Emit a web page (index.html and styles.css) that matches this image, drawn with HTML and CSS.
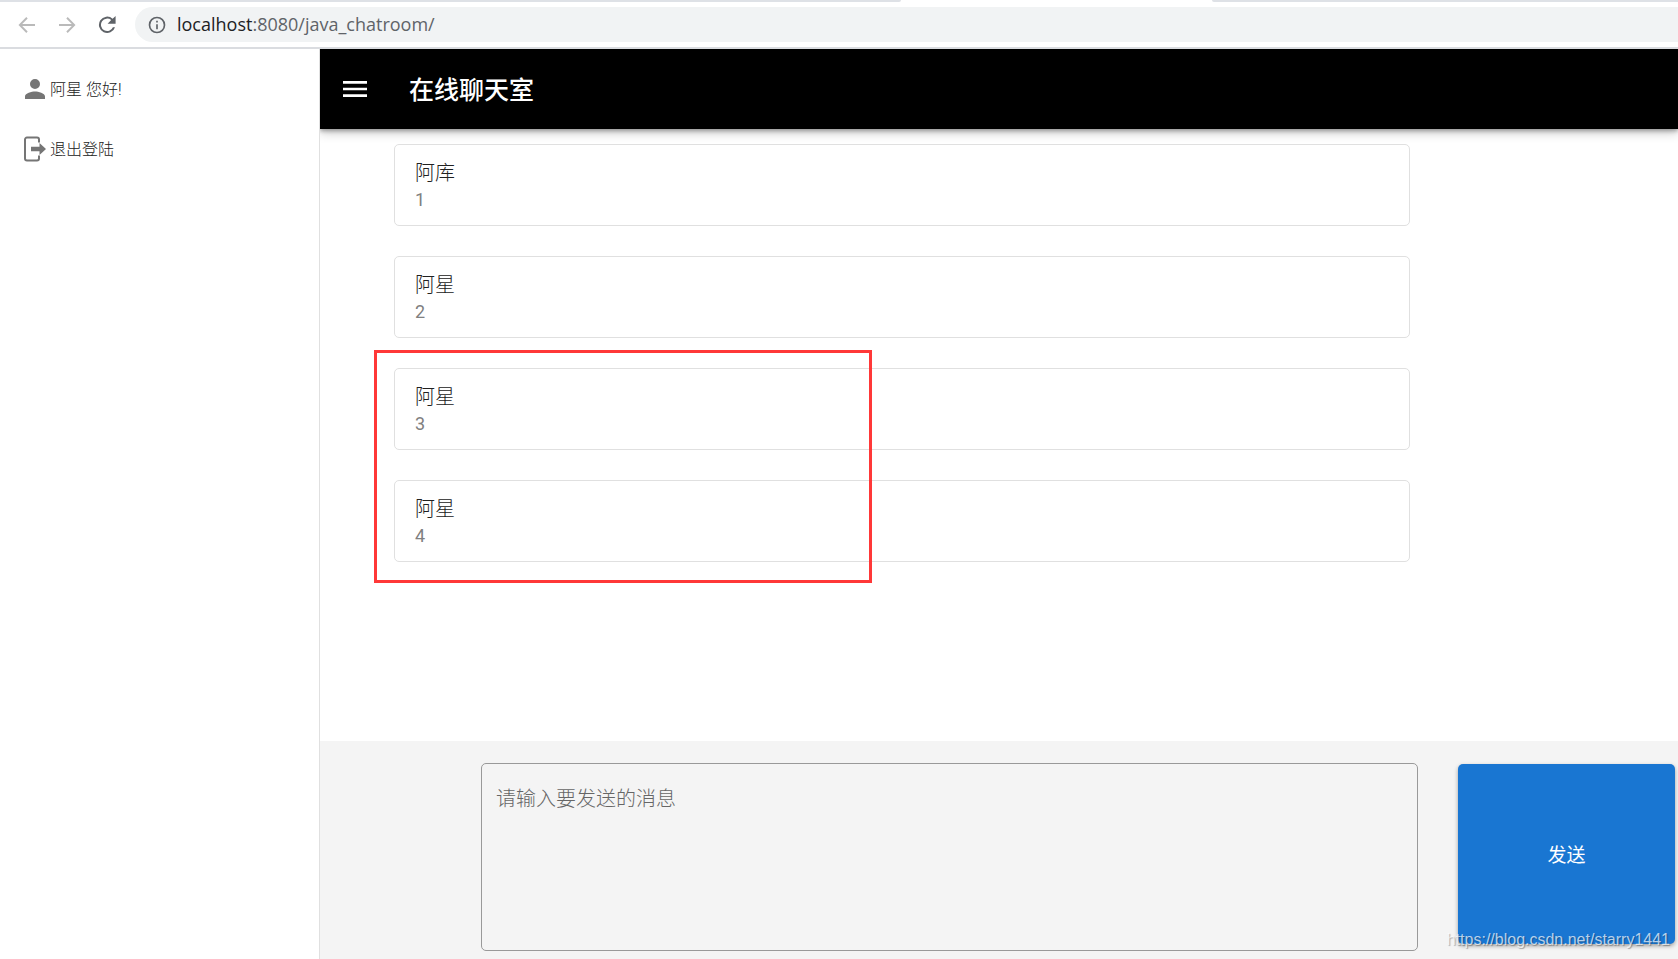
FILE: index.html
```
<!DOCTYPE html>
<html lang="zh-CN">
<head>
    <meta charset="UTF-8">
    <meta name="viewport" content="width=device-width, initial-scale=1.0">
    <title>在线聊天室</title>
    <link rel="stylesheet" href="styles.css">
</head>
<body>
    <!-- Browser bar -->
    <div class="tab-edge"><span class="tab-left"></span><span class="tab-right"></span></div>
    <div class="browser-bar">
        <button class="nav-btn" type="button" aria-label="后退" disabled>
            <svg width="24" height="24" viewBox="0 0 24 24"><path d="M20 11H7.200l5.500-5.500-1.400-1.400L3.500 12l7.800 7.900 1.400-1.400L7.200 13H20z"/></svg>
        </button>
        <button class="nav-btn" type="button" aria-label="前进" disabled>
            <svg width="24" height="24" viewBox="0 0 24 24"><path d="M4 11h12.800l-5.500-5.500 1.400-1.400 7.800 7.900-7.800 7.900-1.400-1.400 5.500-5.500H4z"/></svg>
        </button>
        <button class="nav-btn reload" type="button" aria-label="刷新">
            <svg width="24" height="24" viewBox="0 0 24 24"><path d="M17.600 5.700A8.200 8.200 0 1 0 20 14.200h-2.100A6.200 6.200 0 1 1 16.200 7.100L12.600 10.800H20.600V3z"/></svg>
        </button>
        <div class="address">
            <svg width="20" height="20" viewBox="0 0 24 24"><path d="M11 7h2v2h-2zm0 4h2v6h-2zm1-9a10 10 0 1 0 0 20 10 10 0 0 0 0-20zm0 18a8 8 0 1 1 0-16 8 8 0 0 1 0 16z"/></svg>
            <span class="url"><b>localhost</b>:8080/java_chatroom/</span>
        </div>
    </div>

    <div class="app">
        <!-- Sidebar -->
        <aside class="sidebar">
            <div class="side-item">
                <svg width="30" height="30" viewBox="0 0 24 24"><path d="M12 12a4 4 0 1 0 0-8 4 4 0 0 0 0 8zm0 2c-2.670 0-8 1.340-8 4v2h16v-2c0-2.660-5.330-4-8-4z"/></svg>
                <span>阿星 您好!</span>
            </div>
            <a class="side-item" href="#">
                <svg width="30" height="30" viewBox="0 0 30 30"><path d="M19 8.500V5.500a2 2 0 0 0-2-2H7a2 2 0 0 0-2 2v19a2 2 0 0 0 2 2h10a2 2 0 0 0 2-2v-3" fill="none" stroke="#757575" stroke-width="2"/><path d="M11 12.800h8.500V9L26 15l-6.500 6v-3.800H11z"/></svg>
                <span>退出登陆</span>
            </a>
        </aside>

        <main class="main">
            <header class="header">
                <button class="menu-btn" type="button" aria-label="菜单">
                    <svg width="32" height="32" viewBox="0 0 24 24"><path d="M3 18h18v-2H3v2zm0-5h18v-2H3v2zm0-7v2h18V6H3z"/></svg>
                </button>
                <h1>在线聊天室</h1>
            </header>

            <!-- Message list -->
            <div class="messages">
                <div class="message">
                    <h2>阿库</h2>
                    <p>1</p>
                </div>
                <div class="message">
                    <h2>阿星</h2>
                    <p>2</p>
                </div>
                <div class="marked">
                    <div class="message">
                        <h2>阿星</h2>
                        <p>3</p>
                    </div>
                    <div class="message">
                        <h2>阿星</h2>
                        <p>4</p>
                    </div>
                </div>
            </div>

            <!-- Send form -->
            <form class="send-form">
                <textarea placeholder="请输入要发送的消息" aria-label="请输入要发送的消息"></textarea>
                <button class="send-btn" type="button">发送</button>
                <span class="watermark">https://blog.csdn.net/starry1441</span>
            </form>
        </main>
    </div>
</body>
</html>
```
FILE: styles.css
```
* {
    box-sizing: border-box;
}

body {
    margin: 0;
    height: 100vh;
    display: flex;
    flex-direction: column;
    overflow: hidden;
    background-color: #fff;
    color: #212121;
    font-family: Roboto, "Noto Sans CJK SC", sans-serif;
    font-weight: 300;
}

button {
    border: none;
    padding: 0;
    background: none;
    font-family: inherit;
}

svg {
    display: block;
    flex-shrink: 0;
}

.tab-edge {
    display: flex;
    justify-content: space-between;
    height: 2px;
}

.tab-left,
.tab-right {
    background-color: #dee1e6;
}

.tab-left {
    width: 53.7%;
    border-bottom-right-radius: 2px;
}

.tab-right {
    width: 27.8%;
    border-bottom-left-radius: 2px;
}

.browser-bar {
    display: flex;
    align-items: center;
    gap: 16px;
    height: 47px;
    padding-left: 15px;
    border-bottom: 2px solid #dadce0;
}

.nav-btn svg {
    fill: #bababa;
}

.nav-btn.reload svg {
    fill: #5f6368;
}

.address {
    flex: 1;
    display: flex;
    align-items: center;
    gap: 10px;
    height: 35px;
    padding-left: 12px;
    background-color: #f1f3f4;
    border-radius: 18px 0 0 18px;
    fill: #5f6368;
}

.url {
    font-family: "Open Sans", sans-serif;
    font-size: 18px;
    font-weight: 400;
    line-height: 24px;
    padding-bottom: 2px;
    color: #5f6368;
}

.url b {
    font-weight: 400;
    color: #202124;
}

.app {
    flex: 1;
    display: flex;
    min-height: 0;
}

.sidebar {
    flex: 0 0 320px;
    padding-top: 10px;
    border-right: 1px solid #e0e0e0;
}

.side-item {
    display: flex;
    align-items: center;
    height: 60px;
    padding-left: 20px;
    font-size: 16px;
    color: #212121;
    text-decoration: none;
    fill: #757575;
}

.side-item span {
    padding-bottom: 2px;
}

.main {
    flex: 1;
    display: flex;
    flex-direction: column;
    min-width: 0;
}

.header {
    display: flex;
    align-items: center;
    gap: 38px;
    height: 80px;
    padding-left: 19px;
    background-color: #000;
    color: #fff;
    box-shadow: 0 2px 4px rgba(0, 0, 0, 0.3), 0 4px 10px rgba(0, 0, 0, 0.2);
    clip-path: inset(0 0 -20px 0);
}

.header h1 {
    margin: 0;
    padding-bottom: 2px;
    font-size: 25px;
    font-weight: 500;
}

.menu-btn svg {
    fill: #fff;
}

.messages {
    flex: 1;
    min-height: 0;
    padding: 15px 268px 0 74px;
}

.message {
    height: 82px;
    margin-bottom: 30px;
    padding: 14px 20px;
    border: 1px solid #e0e0e0;
    border-radius: 5px;
}

.message h2 {
    margin: 0;
    font-size: 20px;
    font-weight: 300;
    line-height: 28px;
}

.message p {
    margin: 0;
    font-size: 18px;
    font-weight: 400;
    line-height: 26px;
    color: #808080;
}

.marked {
    position: relative;
}

/* red frame over the last messages */
.marked::after {
    content: "";
    box-sizing: border-box;
    position: absolute;
    top: -18px;
    bottom: -21px;
    left: -20px;
    width: 49%;
    border: 3px solid #ff3838;
}

.send-form {
    position: relative;
    display: flex;
    align-items: flex-start;
    gap: 40px;
    padding: 22px 3px 8px 161px;
    background-color: #f4f4f4;
}

.send-form textarea {
    flex: 1;
    height: 188px;
    padding: 20px 14px;
    border: 1px solid #999;
    border-radius: 5px;
    background: none;
    resize: none;
    font-family: inherit;
    font-size: 20px;
    font-weight: 300;
    line-height: 30px;
}

.send-form textarea::placeholder {
    color: #666;
}

.send-btn {
    flex: 0 0 217px;
    height: 180px;
    margin-top: 1px;
    padding-bottom: 2px;
    border-radius: 5px;
    background-color: #1976d2;
    color: #fff;
    font-size: 19px;
    font-weight: 400;
    box-shadow: 0 2px 4px rgba(0, 0, 0, 0.35);
}

.watermark {
    position: absolute;
    right: 8px;
    bottom: 10px;
    font-family: "Liberation Sans", Arial, sans-serif;
    font-size: 16px;
    font-weight: 400;
    line-height: 18px;
    color: rgba(255, 255, 255, 0.7);
    text-shadow: 1px 1px 1px rgba(0, 0, 0, 0.3);
}
```
